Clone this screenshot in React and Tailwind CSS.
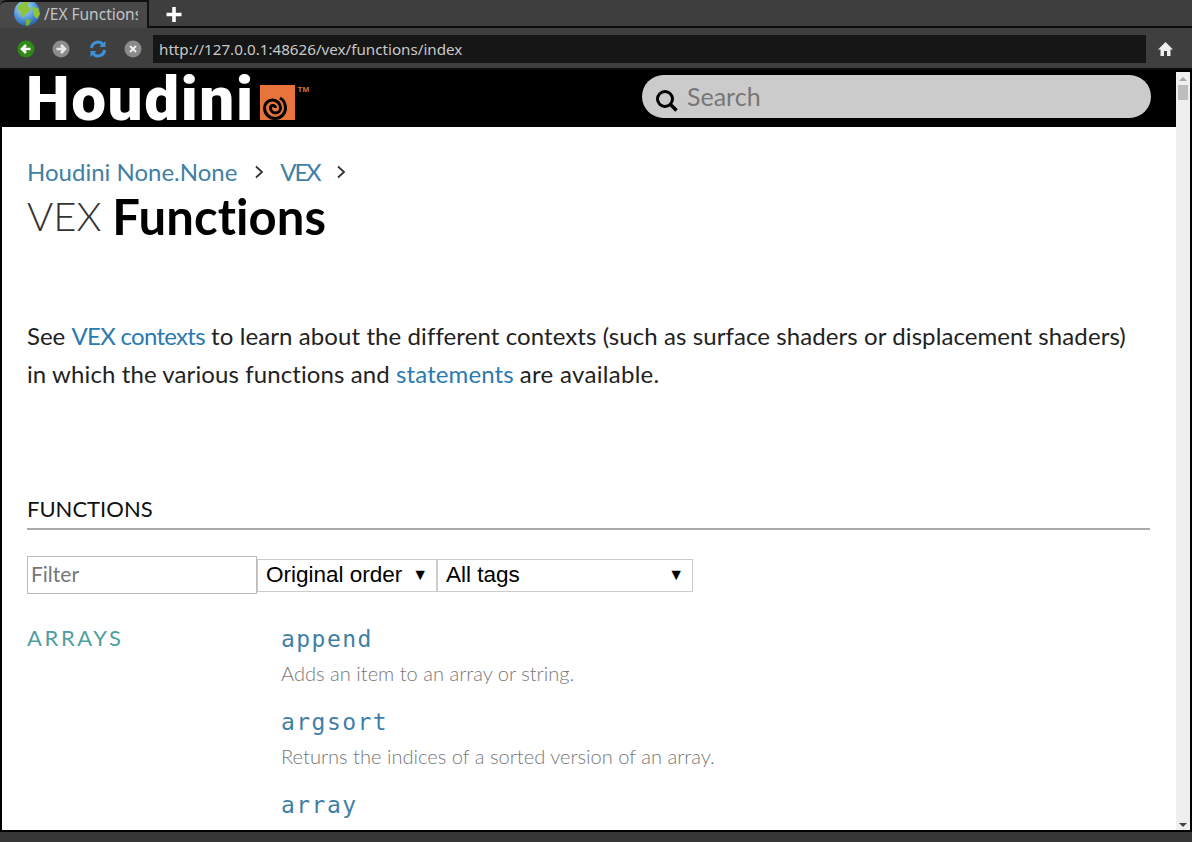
import React from "react";

const sans = "font-['Lato','Noto_Sans',sans-serif]";
const mono = "font-['DejaVu_Sans_Mono',monospace]";

function Globe() {
  return (
    <svg width="28" height="28" viewBox="0 0 28 28" className="shrink-0 -mt-1">
      <defs>
        <radialGradient id="g" cx="40%" cy="30%" r="75%">
          <stop offset="0%" stopColor="#bfe3fa" />
          <stop offset="60%" stopColor="#4f94d8" />
          <stop offset="100%" stopColor="#235a9c" />
        </radialGradient>
      </defs>
      <circle cx="14" cy="14" r="13" fill="url(#g)" />
      <path d="M6 6c3-3 7-4 10-3l-1 4 3 3-3 4-3 1-1 4-3-3-1-4-3-2z" fill="#8ec43c" />
      <path d="M19 8l6 1 2 6-3 5-3-3-1-4z" fill="#8ec43c" />
      <path d="M13 20l5 1-2 5-3 1z" fill="#7ab42f" />
    </svg>
  );
}

function NavCircle({ fill, children }) {
  return (
    <svg width="18" height="18" viewBox="0 0 18 18" className="shrink-0">
      <circle cx="9" cy="9" r="8.5" fill={fill} />
      {children}
    </svg>
  );
}

function Spiral() {
  return (
    <svg width="35" height="35" viewBox="0 0 35 35" className="shrink-0">
      <rect width="35" height="35" fill="#e8743b" />
      <path
        d="M15.500 23A2.500 2.500 0 0 0 10.500 23A5 5 0 0 0 20.500 23A8 8 0 0 0 4.500 23A10.500 10.500 0 0 0 25.500 23C25.500 19 23.500 15 20 13"
        fill="none"
        stroke="#000"
        strokeWidth="3"
      />
    </svg>
  );
}

function Fn({ name, desc }) {
  return (
    <div className="h-[83px] shrink-0">
      <div className={`${mono} text-[23px] leading-[32px] tracking-[1.450px] text-[#3f7fa6]`}>{name}</div>
      {desc && <div className={`${sans} font-light text-[20.100px] leading-[30px] mt-[3px] text-[#777]`}>{desc}</div>}
    </div>
  );
}

function Chevron({ className }) {
  return (
    <svg width="12" height="16" viewBox="0 0 12 16" className={className}>
      <path d="M3 2.500L9 8l-6 5.500" fill="none" stroke="#333" strokeWidth="1.800" />
    </svg>
  );
}

export default function App() {
  return (
    <div className="w-[1192px] h-[842px] overflow-hidden flex flex-col bg-[#3c3c3c]">
      {/* tab strip */}
      <div className="h-[28px] shrink-0 flex items-stretch bg-[#3e3e3e] border-b-2 border-[#0c0c0c]">
        <div className="w-[149px] h-[28px] flex items-center pl-[13px] bg-[#484848] border-t-2 border-r-2 border-[#111] rounded-tl-[6px] overflow-hidden">
          <Globe />
          <span className="w-[99px] -ml-[2px] pl-[5px] overflow-hidden whitespace-nowrap text-[15.500px] text-[#c4c4c4] font-['Noto_Sans',sans-serif]">
            /EX Functions
          </span>
        </div>
        <svg width="20" height="20" viewBox="0 0 20 20" className="ml-[15px] mt-[5px]">
          <path d="M10 2v15M2.500 9.500h15" stroke="#fff" strokeWidth="3.600" />
        </svg>
      </div>
      {/* toolbar */}
      <div className="h-[42px] shrink-0 flex items-center bg-[#3f3f3f] border-b-2 border-[#0c0c0c] pt-[2px] pl-[17px] pr-[17px]">
        <NavCircle fill="#2f8a16">
          <path d="M13.500 9H5.500M9 5L5 9l4 4" fill="none" stroke="#fff" strokeWidth="2.600" />
        </NavCircle>
        <div className="w-[17px]" />
        <NavCircle fill="#8c8c8c">
          <path d="M4.500 9h8M9 5l4 4-4 4" fill="none" stroke="#e8e8e8" strokeWidth="2.600" />
        </NavCircle>
        <div className="w-[19px]" />
        <svg width="18" height="18" viewBox="0 0 18 18" className="shrink-0">
          <path d="M2.500 8A6.500 6.500 0 0 1 14 4.500M15.500 10A6.500 6.500 0 0 1 4 13.500" fill="none" stroke="#3e93d8" strokeWidth="3" />
          <path d="M16.500 1v6h-6zM1.500 17v-6h6z" fill="#3e93d8" />
        </svg>
        <div className="w-[17px]" />
        <NavCircle fill="#8a8a8a">
          <path d="M6 6l6 6M12 6l-6 6" stroke="#eee" strokeWidth="2" />
        </NavCircle>
        <div className="ml-[11px] w-[993px] h-[28px] flex items-center pl-[6px] bg-[#161616] text-[15.200px] text-[#c8c8c8] font-['Noto_Sans',sans-serif]">
          http://127.0.0.1:48626/vex/functions/index
        </div>
        <svg width="15" height="16" viewBox="0 0 15 16" className="ml-[12px]">
          <path d="M7.500 1L0 8.500h2.500V15h3.500v-5h3v5h3.500V8.500H15z" fill="#eee" />
        </svg>
      </div>
      {/* page */}
      <div className="flex-1 min-h-0 flex bg-black border-x-2 border-t-2 border-black">
        <div className="flex-1 min-w-0 flex flex-col">
          <div className="h-[55px] shrink-0 bg-black flex items-start pl-[24px]">
            <span className="font-['Roboto',sans-serif] font-black text-[62px] leading-[53px] tracking-[1.600px] text-white">
              Houdini
            </span>
            <div className="ml-[5px] mt-[13px]"><Spiral /></div>
            <span className="text-[8px] leading-none font-bold text-[#c87a45] mt-[14px] ml-[3px] font-['Liberation_Sans',sans-serif]">TM</span>
            <div className="ml-auto mr-[25px] mt-[3px] w-[509px] h-[43px] rounded-full bg-[#cbcbcb] flex items-center pl-[13px]">
              <svg width="24" height="24" viewBox="0 0 24 24" className="mt-[8px]">
                <circle cx="10" cy="10" r="7.500" fill="none" stroke="#000" strokeWidth="3" />
                <path d="M15.500 15.500l6 6" stroke="#000" strokeWidth="3.500" />
              </svg>
              <span className={`${sans} ml-[8px] text-[25px] text-[#777]`}>Search</span>
            </div>
          </div>
          <div className={`flex-1 min-h-0 overflow-hidden bg-white pl-[25px] pr-[25px] ${sans}`}>
            <div className="mt-[26px] flex items-center text-[24px] leading-[38px] text-[#3f7fa6]">
              <span>Houdini None.None</span>
              <Chevron className="ml-[16px] mr-[15px]" />
              <span className="tracking-[-2.200px]">VEX</span>
              <Chevron className="ml-[16px]" />
            </div>
            <h1 className="-mt-[1px] h-[52px] flex items-center text-black whitespace-nowrap">
              <span className="font-light text-[40px] leading-[52px] text-[#333]">VEX</span>
              <span className="ml-[11px] font-bold text-[49px] leading-[52px] tracking-[0.100px]">Functions</span>
            </h1>
            <p className="mt-[75px] text-[24px] leading-[38px] text-[#222] whitespace-nowrap">
              See <span className="text-[#2b7ab0] tracking-[-0.700px]">VEX contexts</span>{" "}
              <span className="tracking-[0.090px]">to learn about the different contexts (such as surface shaders or displacement shaders)</span>
              <br />
              <span className="tracking-[0.100px]">
                in which the various functions and <span className="text-[#2b7ab0]">statements</span>
              </span>{" "}
              <span className="tracking-[0.300px]">are available.</span>
            </p>
            <div className="mt-[97px] h-[40px] text-[22px] leading-[38px] text-[#111] border-b-2 border-[#aaa] w-[1123px]">FUNCTIONS</div>
            <div className="mt-[26px] flex items-center">
              <div className="w-[230px] h-[38px] border border-[#bbb] flex items-center pl-[3px] pb-[2px] text-[21px] text-[#777]">Filter</div>
              <div className="w-[180px] h-[33px] border border-[#ccc] flex items-center justify-between pl-[8px] pr-[8px] pb-[1px] text-[22.500px] font-['Liberation_Sans',sans-serif] text-black">
                <span>Original order</span><span className="text-[16px]">▼</span>
              </div>
              <div className="w-[256px] h-[33px] border border-[#ccc] flex items-center justify-between pl-[8px] pr-[8px] pb-[1px] text-[22.500px] font-['Liberation_Sans',sans-serif] text-black">
                <span>All tags</span><span className="text-[16px]">▼</span>
              </div>
            </div>
            <div className="mt-[29px] flex">
              <div className="w-[254px] shrink-0 text-[22px] leading-[32px] tracking-[2.600px] text-[#4f9ea3] -mt-[1px]">ARRAYS</div>
              <div className="flex flex-col">
                <Fn name="append" desc="Adds an item to an array or string." />
                <Fn name="argsort" desc="Returns the indices of a sorted version of an array." />
                <Fn name="array" />
              </div>
            </div>
          </div>
        </div>
        <div className="w-[14px] shrink-0 bg-[#efefef] flex flex-col items-center relative">
          <div className="mt-[5px] w-0 h-0 border-x-[4px] border-x-transparent border-b-[4px] border-b-[#a8a8a8]" />
          <div className="mt-[4px] w-[10px] h-[15px] bg-[#bdbdbd]" />
          <div className="mt-auto mb-[3px] w-0 h-0 border-x-[4px] border-x-transparent border-t-[4px] border-t-[#444]" />
        </div>
      </div>
      <div className="h-[12px] shrink-0 bg-[#363636] border-t-2 border-black" />
    </div>
  );
}
